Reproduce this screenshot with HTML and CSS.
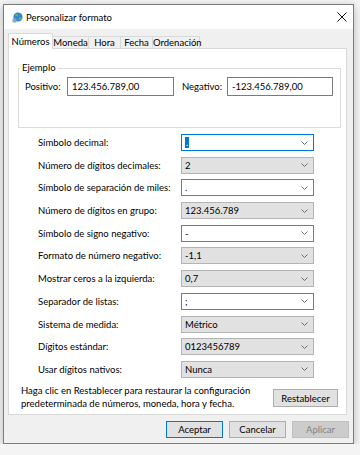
FILE: index.html
```html
<!DOCTYPE html>
<html lang="es">
<head>
    <meta charset="UTF-8">
    <meta name="viewport" content="width=device-width, initial-scale=1.0">
    <title>Personalizar formato</title>
    <link rel="stylesheet" href="styles.css">
</head>
<body>

<div class="dialog">
    <div class="titlebar">
        <svg class="app-icon" width="11" height="11" viewBox="0 0 11 11">
            <circle cx="6" cy="5" r="4.6" fill="#2f86d6"/>
            <path d="M3.2 2.4 C4.4 1.6 5.6 2 6.2 3 C6.6 3.8 5.6 4.4 4.8 4.2 C4 4 3 3.6 3.2 2.4 Z" fill="#5cb85c"/>
            <path d="M7 5.6 C8 5.2 9.6 5.4 9.8 6.4 C9.4 7.8 8.2 8.8 7.2 8.6 C6.8 7.6 6.4 6.2 7 5.6 Z" fill="#5cb85c"/>
            <rect x="0.5" y="6.5" width="4" height="4" rx="0.6" fill="#9aa3ab"/>
        </svg>
        <span class="title">Personalizar formato</span>
        <svg class="close" width="10" height="10" viewBox="0 0 10 10">
            <path d="M0.5 0.5 L9.5 9.5 M9.5 0.5 L0.5 9.5" stroke="#111" stroke-width="1"/>
        </svg>
    </div>

    <div class="dialog-body">
        <div class="tabs">
            <span class="tab active">Números</span>
            <span class="tab w-moneda">Moneda</span>
            <span class="tab w-hora">Hora</span>
            <span class="tab w-fecha">Fecha</span>
            <span class="tab w-orden">Ordenación</span>
        </div>

        <div class="panel">
            <fieldset class="sample">
                <legend>Ejemplo</legend>
                <div class="sample-row">
                    <span class="sample-label">Positivo:</span>
                    <div class="textbox pos">123.456.789,00</div>
                    <span class="sample-label neg-label">Negativo:</span>
                    <div class="textbox neg">-123.456.789,00</div>
                </div>
            </fieldset>

            <div class="settings">
                <div class="row">
                    <span class="row-label">Símbolo decimal:</span>
                    <div class="combo edit focus"><span class="sel">.</span></div>
                </div>
                <div class="row">
                    <span class="row-label">Número de dígitos decimales:</span>
                    <div class="combo list">2</div>
                </div>
                <div class="row">
                    <span class="row-label">Símbolo de separación de miles:</span>
                    <div class="combo edit">.</div>
                </div>
                <div class="row">
                    <span class="row-label">Número de dígitos en grupo:</span>
                    <div class="combo list">123.456.789</div>
                </div>
                <div class="row">
                    <span class="row-label">Símbolo de signo negativo:</span>
                    <div class="combo edit">-</div>
                </div>
                <div class="row">
                    <span class="row-label">Formato de número negativo:</span>
                    <div class="combo list">-1,1</div>
                </div>
                <div class="row">
                    <span class="row-label">Mostrar ceros a la izquierda:</span>
                    <div class="combo list">0,7</div>
                </div>
                <div class="row">
                    <span class="row-label">Separador de listas:</span>
                    <div class="combo edit">;</div>
                </div>
                <div class="row">
                    <span class="row-label">Sistema de medida:</span>
                    <div class="combo list">Métrico</div>
                </div>
                <div class="row">
                    <span class="row-label">Dígitos estándar:</span>
                    <div class="combo list">0123456789</div>
                </div>
                <div class="row">
                    <span class="row-label">Usar dígitos nativos:</span>
                    <div class="combo list">Nunca</div>
                </div>
            </div>

            <div class="reset-row">
                <p>Haga clic en Restablecer para restaurar la configuración<br>predeterminada de números, moneda, hora y fecha.</p>
                <button class="btn reset">Restablecer</button>
            </div>
        </div>

        <div class="actions">
            <button class="btn default">Aceptar</button>
            <button class="btn">Cancelar</button>
            <button class="btn" disabled>Aplicar</button>
        </div>
    </div>
</div>

<script>
    // add the dropdown arrow to every combo box
    document.querySelectorAll('.combo').forEach(combo => {
        combo.insertAdjacentHTML('beforeend',
            '<svg class="arrow" width="7" height="4" viewBox="0 0 7 4"><polyline points="0.5,0.5 3.5,3.5 6.5,0.5" fill="none" stroke="#6d6d6d" stroke-width="1"/></svg>');
    });
</script>

</body>
</html>
```

FILE: styles.css
```css
body {
    margin: 0;
    padding: 4px 0 0 3px;
    background-color: #f4f4f4;
    font-family: Lato, "Noto Sans", sans-serif;
    font-size: 9.5px;
    color: #000;
}
.dialog {
    width: 351px;
    height: 440px;
    box-sizing: border-box;
    border: 1px solid #7c7c7c;
    background-color: #f0f0f0;
    box-shadow: 0 2px 8px rgba(0,0,0,0.25);
    display: flex;
    flex-direction: column;
}
.titlebar {
    height: 24px;
    flex: none;
    background-color: #fff;
    display: flex;
    align-items: center;
    padding: 0 6px 0 8px;
}
.app-icon {
    margin-right: 3px;
}
.title {
    flex: 1;
}
.dialog-body {
    flex: 1;
    padding: 4px 6px 0 4px;
    display: flex;
    flex-direction: column;
}
/* Tabs */
.tabs {
    height: 15px;
    display: flex;
    align-items: flex-end;
    position: relative;
    z-index: 1;
}
.tab {
    height: 12px;
    box-sizing: border-box;
    margin-left: -1px;
    border: 1px solid #d9d9d9;
    border-bottom: none;
    background-color: #f0f0f0;
    line-height: 11px;
    text-align: center;
    white-space: nowrap;
}
.tab.active {
    width: 45px;
    height: 16px;
    margin-left: 0;
    margin-bottom: -1px;
    background-color: #fff;
    line-height: 15px;
    position: relative;
    z-index: 2;
}
.w-moneda { width: 37px; }
.w-hora { width: 33px; }
.w-fecha { width: 33px; }
.w-orden { width: 48px; }
.panel {
    height: 367px;
    box-sizing: border-box;
    border: 1px solid #d9d9d9;
    background-color: #fff;
    padding: 0 5px 0 9px;
}
/* Sample group */
.sample {
    margin: 13px 0 0;
    padding: 3px 6px 31px 6px;
    border: 1px solid #dcdcdc;
}
.sample legend {
    padding: 0 2px;
    margin-left: -5px;
    line-height: 12px;
}
.sample-row {
    display: flex;
    align-items: center;
}
.sample-label {
    width: 42px;
}
.neg-label {
    width: 45px;
    margin-left: 8px;
}
.textbox {
    height: 19px;
    box-sizing: border-box;
    border: 1px solid #7a7a7a;
    padding: 0 4px;
    line-height: 17px;
}
.textbox.pos {
    width: 107px;
}
.textbox.neg {
    width: 106px;
}
/* Settings list */
.settings {
    margin-top: 6px;
    padding-left: 20px;
    display: grid;
    row-gap: 5.7px;
}
.row {
    display: flex;
    align-items: center;
    height: 17px;
}
.row-label {
    width: 143px;
}
.combo {
    width: 133px;
    height: 17px;
    box-sizing: border-box;
    padding: 0 5px 0 3px;
    display: flex;
    align-items: center;
    justify-content: space-between;
    line-height: 15px;
}
.combo.edit {
    border: 1px solid #7a7a7a;
    background-color: #fff;
}
.combo.list {
    border: 1px solid #b4b4b4;
    background-color: #e1e1e1;
}
.combo.focus {
    border-color: #0078d7;
}
.sel {
    background-color: #0078d7;
    color: #fff;
    padding: 0 1px;
    line-height: 11px;
}
/* Reset note */
.reset-row {
    margin-top: 6px;
    padding: 0 3px;
    display: flex;
    align-items: center;
    justify-content: space-between;
}
.reset-row p {
    margin: 0;
    line-height: 13px;
}
.btn {
    height: 18px;
    box-sizing: border-box;
    border: 1px solid #adadad;
    background-color: #e1e1e1;
    color: #000;
    font: inherit;
    padding: 0;
}
.btn.reset {
    width: 65px;
    margin-top: 3px;
}
.btn.default {
    border-color: #0078d7;
}
.btn:disabled {
    background-color: #cccccc;
    border-color: #bfbfbf;
    color: #838383;
}
.actions {
    margin: 6px -2px 0 0;
    display: flex;
    justify-content: flex-end;
    gap: 6px;
}
.actions .btn {
    width: 57px;
    height: 17px;
}
```
